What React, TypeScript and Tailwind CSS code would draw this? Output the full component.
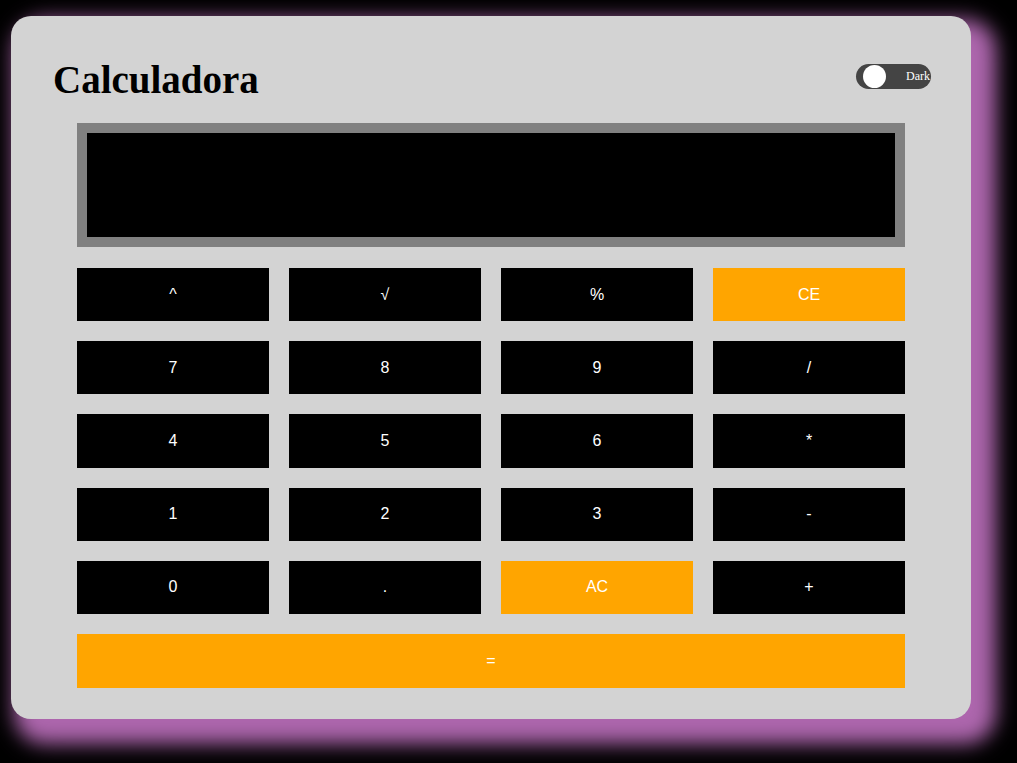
import React from "react";

const keys: { label: string; orange?: boolean }[] = [
  { label: "^" },
  { label: "√" },
  { label: "%" },
  { label: "CE", orange: true },
  { label: "7" },
  { label: "8" },
  { label: "9" },
  { label: "/" },
  { label: "4" },
  { label: "5" },
  { label: "6" },
  { label: "*" },
  { label: "1" },
  { label: "2" },
  { label: "3" },
  { label: "-" },
  { label: "0" },
  { label: "." },
  { label: "AC", orange: true },
  { label: "+" },
];

export default function App() {
  return (
    <div className="w-[1017px] h-[763px] bg-black overflow-hidden pt-[16px] pl-[11px]">
      <div className="w-[960px] h-[703px] bg-[#d3d3d3] rounded-[20px] shadow-[14px_14px_20px_11px_#ad66ad] pt-[41px] flex flex-col">
        <div className="flex justify-between px-[40px] h-[46px]">
          <h1 className="text-[39px] leading-[46px] font-bold text-black ml-[2px]" style={{ fontFamily: '"Liberation Serif", "Times New Roman", serif' }}>
            Calculadora
          </h1>
          <div className="relative w-[75px] h-[25px] mt-[7px] rounded-full bg-[#444444]">
            <div className="absolute left-[7px] top-[1px] w-[23px] h-[23px] rounded-full bg-white" />
            <span
              className="absolute right-[1px] top-[5px] text-[12px] leading-[14px] text-white"
              style={{ fontFamily: '"Liberation Serif", "Times New Roman", serif' }}
            >
              Dark
            </span>
          </div>
        </div>
        <div className="px-[66px] mt-[20px]">
          <div className="h-[124px] border-[10px] border-[#808080] bg-black" />
          <div
            className="grid grid-cols-4 gap-x-[20px] gap-y-[20px] mt-[21px]"
            style={{ fontFamily: '"Liberation Sans", Arial, sans-serif' }}
          >
            {keys.map((k) => (
              <button
                key={k.label}
                className={`h-[53.2px] flex items-center justify-center text-[16px] text-white ${k.orange ? "bg-[#ffa500]" : "bg-black"}`}
              >
                {k.label}
              </button>
            ))}
            <button className="col-span-4 h-[54px] flex items-center justify-center text-[16px] text-white bg-[#ffa500]">
              =
            </button>
          </div>
        </div>
      </div>
    </div>
  );
}
